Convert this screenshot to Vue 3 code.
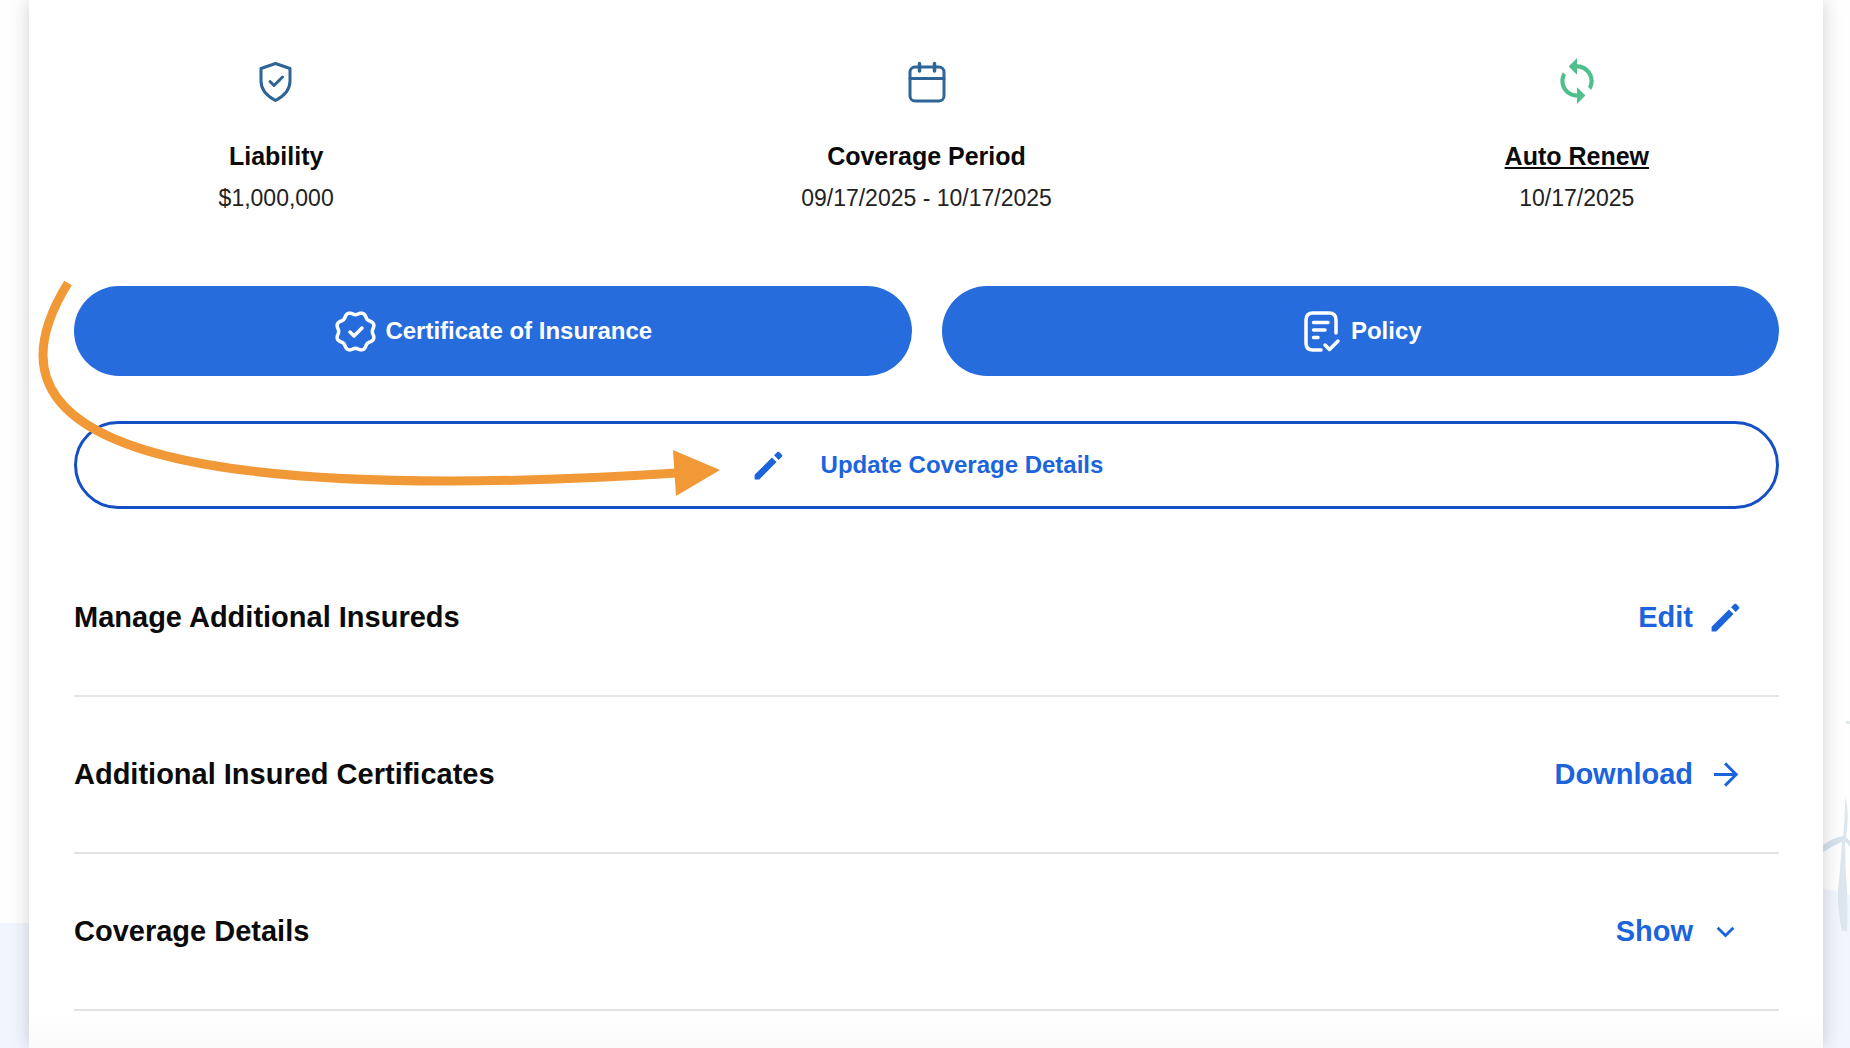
<template>
    <div class="page">
        <div class="land_left"></div>
        <svg class="land_right" viewBox="0 0 30 348" aria-hidden="true">
            <path d="M0 189 Q16 190 30 195 V348 H0Z" fill="#f1f5fe" />
            <path d="M26 21 H30 V24 H26Z" fill="#dfeaf2" />
            <path d="M25 97 Q30 112 26 138 L23 138 Q25 116 25 97Z" fill="#dbe6ef" />
            <path d="M24 136 Q14 137 3 145 V152 Q14 145 24 141Z" fill="#d6e2ec" />
            <path d="M24 137 Q28 138 30 142 V147 Q27 142 24 141Z" fill="#d6e2ec" />
            <path d="M22 139 H25 Q25 165 27 190 Q28 212 27 231 H22 Q17 208 18 190 Q21 162 22 139Z" fill="#dbe6ef" />
        </svg>
        <main class="card">
            <div class="stats">
                <div class="stat">
                    <svg class="stat_icon" viewBox="0 0 50 50" fill="none" stroke="#2f6496" stroke-width="3"
                        stroke-linejoin="round" stroke-linecap="round">
                        <path d="M24.500 7.500 L39 12.500 V25 Q39 37 24.500 44.500 Q10 37 10 25 V12.500Z" />
                        <path d="M19 25.500 L23 29.500 L31.500 21" />
                    </svg>
                    <h3>Liability</h3>
                    <p>$1,000,000</p>
                </div>
                <div class="stat">
                    <svg class="stat_icon" viewBox="0 0 50 50" fill="none" stroke="#2f6496" stroke-width="3"
                        stroke-linecap="round">
                        <rect x="9" y="11" width="34" height="34" rx="5" />
                        <path d="M9 22.500 H43" />
                        <path d="M18.500 7.500 V15 M33.500 7.500 V15" stroke-width="3.500" />
                    </svg>
                    <h3>Coverage Period</h3>
                    <p>09/17/2025 - 10/17/2025</p>
                </div>
                <div class="stat">
                    <svg class="stat_icon" viewBox="0 0 24 24" fill="#4fbf8b">
                        <path
                            d="M12 4V1L8 5l4 4V6c3.310 0 6 2.690 6 6 0 1.010-.25 1.970-.7 2.800l1.460 1.460C19.540 15.030 20 13.570 20 12c0-4.420-3.580-8-8-8zm0 14c-3.310 0-6-2.690-6-6 0-1.010.25-1.970.7-2.800L5.240 7.740C4.460 8.970 4 10.430 4 12c0 4.420 3.580 8 8 8v3l4-4-4-4v3z" />
                    </svg>
                    <h3><a href="#">Auto Renew</a></h3>
                    <p>10/17/2025</p>
                </div>
            </div>

            <div class="documents">
                <button class="btn btn_fill" type="button">
                    <svg class="btn_icon" viewBox="0 0 45 45" fill="none" stroke="#fff" stroke-width="3.500"
                        stroke-linecap="round" stroke-linejoin="round">
                        <path :d="sealPath" />
                        <path d="M17 23 L21 27 L29 19" />
                    </svg>
                    Certificate of Insurance
                </button>
                <button class="btn btn_fill" type="button">
                    <svg class="btn_icon" viewBox="0 0 45 45" fill="none" stroke="#fff" stroke-width="3.500"
                        stroke-linecap="round" stroke-linejoin="round">
                        <path d="M22 41 H14 Q7 41 7 34 V11 Q7 4 14 4 H30 Q37 4 37 11 V24" />
                        <path d="M14.500 13.500 H29 M14.500 21 H26 M14.500 28.500 H19" />
                        <path d="M26 36 L30.500 40.500 L39 32" />
                    </svg>
                    Policy
                </button>
            </div>

            <button class="btn btn_outline" type="button">
                <svg class="row_icon" viewBox="0 0 24 24" fill="currentColor">
                    <path :d="pencilPath" />
                </svg>
                Update Coverage Details
            </button>

            <section class="sections">
                <div v-for="item in sections" :key="item.title" class="section_row">
                    <h2>{{ item.title }}</h2>
                    <button class="section_action" type="button" @click="item.open = !item.open">
                        {{ item.action }}
                        <svg class="row_icon" viewBox="0 0 24 24">
                            <path v-if="item.icon == 'pencil'" :d="pencilPath" fill="currentColor" />
                            <path v-else-if="item.icon == 'arrow'" d="M4.500 12 H18.700 M11.700 4.800 L18.900 12 L11.700 19.200"
                                fill="none" stroke="currentColor" stroke-width="1.900" />
                            <path v-else d="M6.900 9.500 L12 14.600 L17.100 9.500" fill="none" stroke="currentColor"
                                stroke-width="1.800" />
                        </svg>
                    </button>
                </div>
            </section>

            <!-- hint arrow pointing at the update button -->
            <svg class="hint" viewBox="0 0 700 260" aria-hidden="true">
                <path d="M39 23 C21 52 14 74 14 95 C14 174 130 221 420 221 C490 221 570 218 648 213" fill="none"
                    stroke="#f19837" stroke-width="9" />
                <path d="M644 190 L691 210 L647 236Z" fill="#f19837" />
            </svg>
            <div class="fade"></div>
        </main>
    </div>
</template>

<script setup>
import { ref } from 'vue'

const pencilPath = 'M3 18V21h3L17.200 9.800l-3-3L3 18zM20.700 6.300c.35-.35.35-.9 0-1.250l-1.750-1.750c-.35-.35-.9-.35-1.250 0l-2.100 2.100 3 3 2.100-2.100z'

const sections = ref([
    { title: 'Manage Additional Insureds', action: 'Edit', icon: 'pencil', open: false },
    { title: 'Additional Insured Certificates', action: 'Download', icon: 'arrow', open: false },
    { title: 'Coverage Details', action: 'Show', icon: 'chevron', open: false }
])

// wavy outline with eight lobes
function seal(cx, cy, radius, wave) {
    const points = []
    for (let i = 0; i < 96; i++) {
        const a = (i / 96) * Math.PI * 2
        const r = radius - wave * Math.cos(a * 8)
        points.push(`${(cx + r * Math.cos(a)).toFixed(2)} ${(cy + r * Math.sin(a)).toFixed(2)}`)
    }
    return 'M' + points.join('L') + 'Z'
}
const sealPath = seal(22.5, 22.5, 18.2, 1.4)
</script>

<style>
body {
    margin: 0;
    background-color: #fefefe;
}
</style>

<style scoped>
.page {
    position: relative;
    display: flex;
    min-height: 100vh;
    padding: 0 27px 0 29px;
    box-sizing: border-box;
    overflow: hidden;
    font-family: "Liberation Sans", Arial, sans-serif;
    color: #0b0b0b;
}

.land_left {
    position: absolute;
    left: 0;
    bottom: 0;
    width: 50%;
    height: 125px;
    background-color: #f1f5fe;
}

.land_right {
    position: absolute;
    right: 0;
    bottom: 0;
    width: 30px;
    height: 348px;
}

.card {
    position: relative;
    flex: 1;
    padding: 56px 44px 0 45px;
    background-color: #fff;
    box-shadow: 0 0 18px rgba(0, 0, 0, .18);
}

h2,
h3,
p {
    margin: 0;
}

.stats {
    display: grid;
    grid-template-columns: repeat(3, 1fr);
    column-gap: 246px;
}

.stat {
    display: flex;
    flex-direction: column;
    align-items: center;
    white-space: nowrap;
}

.stat_icon {
    width: 50px;
    height: 50px;
    margin-bottom: 29px;
}

.stat h3 {
    font-size: 25px;
    line-height: 42px;
}

.stat a {
    color: inherit;
    text-decoration-thickness: 2px;
    text-underline-offset: 2px;
}

.stat p {
    font-size: 23px;
    line-height: 42px;
    color: #222;
}

.documents {
    display: grid;
    grid-template-columns: 1fr 1fr;
    gap: 30px;
    margin: 67px 0 45px;
}

.btn {
    display: flex;
    align-items: center;
    justify-content: center;
    border-radius: 45px;
    font-family: inherit;
    font-size: 24px;
    font-weight: bold;
    cursor: pointer;
}

.btn_fill {
    gap: 7px;
    height: 90px;
    border: none;
    background-color: #266cdd;
    color: #fff;
}

.btn_outline {
    gap: 34px;
    width: 100%;
    height: 88px;
    border: 3px solid #1450c4;
    background-color: #fff;
    color: #1c64dc;
}

.btn_icon {
    width: 45px;
    height: 45px;
}

.row_icon {
    width: 37px;
    height: 37px;
}

.sections {
    margin-top: 31px;
}

.section_row {
    display: flex;
    align-items: center;
    justify-content: space-between;
    height: 155px;
    padding-right: 35px;
    border-bottom: 2px solid #e3e3e3;
}

.section_row h2 {
    font-size: 29px;
}

.section_action {
    display: flex;
    align-items: center;
    gap: 14px;
    padding: 0;
    border: none;
    background: none;
    font-family: inherit;
    font-size: 29px;
    font-weight: bold;
    color: #1c64dc;
    cursor: pointer;
}

.hint {
    position: absolute;
    left: 0;
    top: 260px;
    width: 700px;
    height: 260px;
    pointer-events: none;
}

.fade {
    position: absolute;
    left: 0;
    right: 0;
    bottom: 0;
    height: 40px;
    background: linear-gradient(rgba(0, 0, 0, 0), rgba(0, 0, 0, .02));
    pointer-events: none;
}
</style>
